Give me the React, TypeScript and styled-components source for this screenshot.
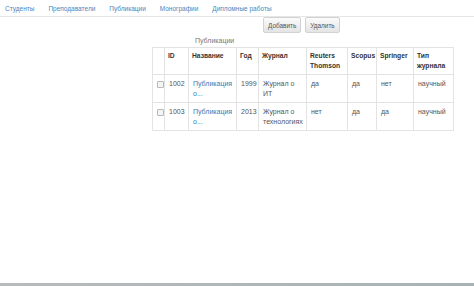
import styled, { createGlobalStyle } from "styled-components";

const GlobalStyle = createGlobalStyle`
  html, body {
    margin: 0;
    padding: 0;
    background: #fff;
  }
  body {
    font-family: "Liberation Sans", Arial, sans-serif;
    font-size: 7px;
    color: #333;
  }
`;

const Page = styled.div`
  width: 474px;
  height: 286px;
  display: flex;
  flex-direction: column;
`;

const NavBar = styled.ul`
  display: flex;
  list-style: none;
  margin: 0;
  padding: 0 0 0 5px;
  height: 16px;
  align-items: center;
  gap: 14px;
  border-bottom: 1px solid #e6e6e6;
`;

const NavLink = styled.li`
  font-size: 6.5px;
  color: #4a86bd;
`;

const Content = styled.div`
  flex: 1;
  display: flex;
  flex-direction: column;
  padding-left: 152px;
`;

const Toolbar = styled.div`
  display: flex;
  gap: 4px;
  margin: 0 0 0 111px;
`;

const Button = styled.button`
  font-family: inherit;
  font-size: 6.4px;
  color: #555;
  height: 16px;
  padding: 0 4px;
  border: 1px solid #d2d2d2;
  border-radius: 2px;
  background: linear-gradient(#fbfbfb, #e4e4e4);
`;

const Caption = styled.div`
  color: #777;
  font-size: 7px;
  padding: 4px 0 0 43px;
  height: 10px;
`;

const Table = styled.table`
  border-collapse: collapse;
  table-layout: fixed;
  width: 301px;
  font-size: 7px;
  line-height: 10px;
  th,
  td {
    border: 1px solid #e3e3e3;
    padding: 3px 1px 3px 4px;
    text-align: left;
    vertical-align: top;
  }
  th {
    font-weight: bold;
    font-size: 6.7px;
    color: #333;
    padding-left: 3px;
  }
  td {
    color: #555;
    padding-top: 4px;
  }
`;

const Check = styled.span`
  display: inline-block;
  width: 5px;
  height: 5px;
  border: 1px solid #b8b8b8;
  border-radius: 1px;
  background: #f4f4f4;
  margin-top: 2px;
`;

const TitleLink = styled.span`
  color: #3a79b4;
`;

const BottomBar = styled.div`
  height: 3px;
  background: linear-gradient(90deg, #b7bbbc, #a8b2b5);
`;

const rows = [
  { id: "1002", year: "1999", journal: "Журнал о ИТ", reuters: "да", scopus: "да", springer: "нет", type: "научный" },
  { id: "1003", year: "2013", journal: "Журнал о технологиях", reuters: "нет", scopus: "да", springer: "да", type: "научный" },
];

const widths = [12, 24, 48, 22, 48, 41, 29, 37, 40];

export default function App() {
  return (
    <Page>
      <GlobalStyle />
      <NavBar>
        <NavLink>Студенты</NavLink>
        <NavLink>Преподаватели</NavLink>
        <NavLink>Публикации</NavLink>
        <NavLink>Монографии</NavLink>
        <NavLink>Дипломные работы</NavLink>
      </NavBar>
      <Content>
        <Toolbar>
          <Button>Добавить</Button>
          <Button>Удалить</Button>
        </Toolbar>
        <Caption>Публикации</Caption>
        <Table>
          <colgroup>
            {widths.map((w, i) => (
              <col key={i} style={{ width: w }} />
            ))}
          </colgroup>
          <thead>
            <tr>
              <th></th>
              <th>ID</th>
              <th>Название</th>
              <th>Год</th>
              <th>Журнал</th>
              <th>Reuters Thomson</th>
              <th>Scopus</th>
              <th>Springer</th>
              <th>Тип журнала</th>
            </tr>
          </thead>
          <tbody>
            {rows.map((r) => (
              <tr key={r.id}>
                <td>
                  <Check />
                </td>
                <td>{r.id}</td>
                <td>
                  <TitleLink>Публикация о...</TitleLink>
                </td>
                <td>{r.year}</td>
                <td>{r.journal}</td>
                <td>{r.reuters}</td>
                <td>{r.scopus}</td>
                <td>{r.springer}</td>
                <td>{r.type}</td>
              </tr>
            ))}
          </tbody>
        </Table>
      </Content>
      <BottomBar />
    </Page>
  );
}
